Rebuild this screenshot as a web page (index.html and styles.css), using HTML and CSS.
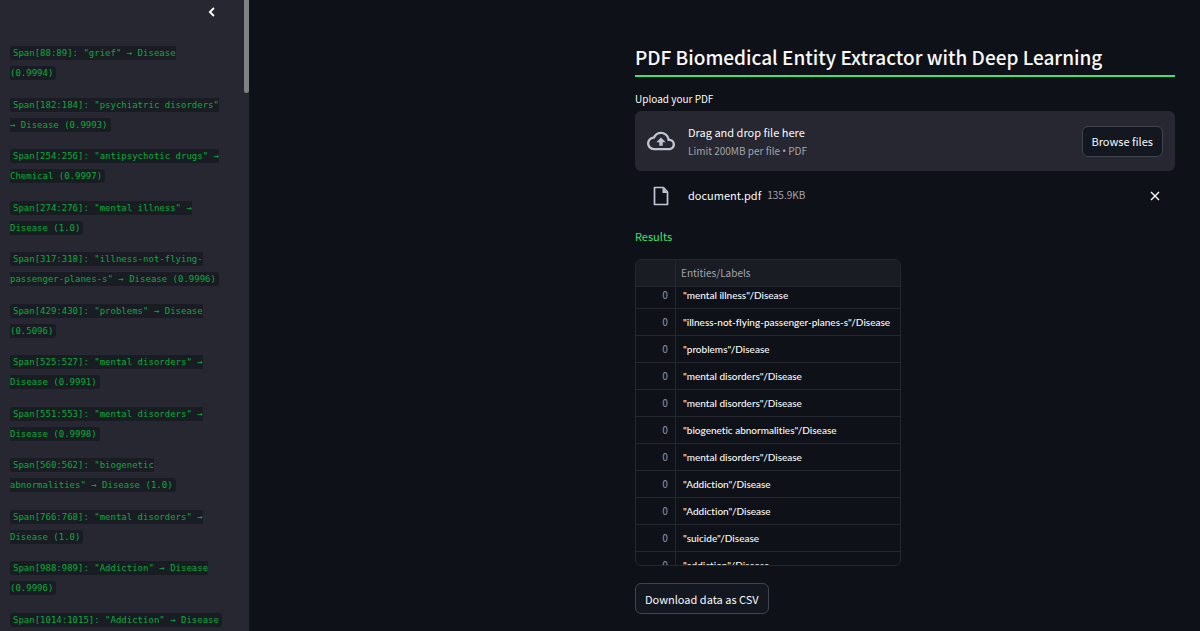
FILE: index.html
```
<!DOCTYPE html>
<html lang="en">
  <head>
    <meta charset="UTF-8" />
    <meta name="viewport" content="width=device-width, initial-scale=1.0" />
    <title>PDF Biomedical Entity Extractor</title>
    <link rel="stylesheet" href="styles.css" />
  </head>
  <body>
    <aside class="sidebar">
      <div class="sidebar-content">
        <button class="collapse" type="button" aria-label="Close sidebar">
          <svg width="14" height="14" viewBox="0 0 8 8">
            <path d="M5.1 1.7L2.800 4l2.300 2.300" fill="none" stroke="currentColor" stroke-width="1.100" />
          </svg>
        </button>
        <div class="spans">
          <p><code>Span[88:89]: "grief" → Disease (0.9994)</code></p>
          <p><code>Span[182:184]: "psychiatric disorders" → Disease (0.9993)</code></p>
          <p><code>Span[254:256]: "antipsychotic drugs" → Chemical (0.9997)</code></p>
          <p><code>Span[274:276]: "mental illness" → Disease (1.0)</code></p>
          <p><code>Span[317:318]: "illness-not-flying-passenger-planes-s" → Disease (0.9996)</code></p>
          <p><code>Span[429:430]: "problems" → Disease (0.5096)</code></p>
          <p><code>Span[525:527]: "mental disorders" → Disease (0.9991)</code></p>
          <p><code>Span[551:553]: "mental disorders" → Disease (0.9998)</code></p>
          <p><code>Span[560:562]: "biogenetic abnormalities" → Disease (1.0)</code></p>
          <p><code>Span[766:768]: "mental disorders" → Disease (1.0)</code></p>
          <p><code>Span[988:989]: "Addiction" → Disease (0.9996)</code></p>
          <p><code>Span[1014:1015]: "Addiction" → Disease</code></p>
        </div>
      </div>
      <div class="scrollbar"><div class="thumb"></div></div>
    </aside>

    <main class="main">
      <div class="block">
        <h1>PDF Biomedical Entity Extractor with Deep Learning</h1>

        <label class="upload-label" for="browse">Upload your PDF</label>
        <section class="dropzone">
          <svg class="cloud" width="28" height="28" viewBox="0 0 24 24" fill="currentColor">
            <path d="M19.35 10.04A7.49 7.49 0 0012 4C9.11 4 6.6 5.64 5.35 8.04A5.994 5.994 0 000 14c0 3.31 2.69 6 6 6h13c2.76 0 5-2.24 5-5 0-2.64-2.05-4.78-4.65-4.96zM19 18H6c-2.21 0-4-1.79-4-4 0-2.05 1.53-3.76 3.56-3.97l1.07-.11.5-.95A5.469 5.469 0 0112 6c2.62 0 4.88 1.86 5.39 4.43l.3 1.5 1.53.11A2.98 2.98 0 0122 15c0 1.65-1.35 3-3 3zM8 13h2.55v3h2.9v-3H16l-4-4z" />
          </svg>
          <div class="instructions">
            <span class="drag">Drag and drop file here</span>
            <small>Limit 200MB per file <span class="dot">•</span> PDF</small>
          </div>
          <button id="browse" class="btn" type="button">Browse files</button>
        </section>

        <div class="file">
          <svg class="file-icon" width="20" height="20" viewBox="0 0 20 20">
            <path d="M3.500 1.500h9l4 4.500v12.500h-13z" fill="none" stroke="currentColor" stroke-width="1.700" stroke-linejoin="round" />
            <path d="M11.500 1.500v5.500h5z" fill="currentColor" />
          </svg>
          <div class="file-data">
            <span class="file-name">document.pdf</span>
            <small>135.9KB</small>
          </div>
          <button class="remove" type="button" aria-label="Remove file">
            <svg width="10" height="10" viewBox="0 0 10 10">
              <path d="M1 1l8 8M9 1L1 9" fill="none" stroke="currentColor" stroke-width="1.400" />
            </svg>
          </button>
        </div>

        <p class="results">Results</p>

        <div class="frame">
          <table>
            <thead>
              <tr><th class="index"></th><th>Entities/Labels</th></tr>
            </thead>
            <tbody>
              <tr><td class="index">0</td><td>"mental illness"/Disease</td></tr>
              <tr><td class="index">0</td><td>"illness-not-flying-passenger-planes-s"/Disease</td></tr>
              <tr><td class="index">0</td><td>"problems"/Disease</td></tr>
              <tr><td class="index">0</td><td>"mental disorders"/Disease</td></tr>
              <tr><td class="index">0</td><td>"mental disorders"/Disease</td></tr>
              <tr><td class="index">0</td><td>"biogenetic abnormalities"/Disease</td></tr>
              <tr><td class="index">0</td><td>"mental disorders"/Disease</td></tr>
              <tr><td class="index">0</td><td>"Addiction"/Disease</td></tr>
              <tr><td class="index">0</td><td>"Addiction"/Disease</td></tr>
              <tr><td class="index">0</td><td>"suicide"/Disease</td></tr>
              <tr><td class="index">0</td><td>"addiction"/Disease</td></tr>
            </tbody>
          </table>
        </div>

        <button class="btn" type="button">Download data as CSV</button>
      </div>
    </main>
  </body>
</html>
```

FILE: styles.css
```
* {
  box-sizing: border-box;
}
body {
  margin: 0;
  display: flex;
  height: 100vh;
  overflow: hidden;
  background-color: #0e1117;
  color: #fafafa;
  font-family: "Noto Sans CJK SC", "Noto Sans", sans-serif;
  font-size: 11px;
  line-height: 16px;
}
button {
  font: inherit;
  color: inherit;
  cursor: pointer;
}
svg {
  display: block;
}

/* sidebar */
.sidebar {
  flex: 0 0 249px;
  display: flex;
  overflow: hidden;
  background-color: #262730;
}
.sidebar-content {
  flex: 1;
  padding: 5px 18px 0 10px;
}
.collapse {
  display: block;
  margin: 0 7px 0 auto;
  padding: 0;
  border: none;
  background: none;
}
.spans {
  margin-top: 24px;
  font-family: "DejaVu Sans Mono", monospace;
  font-size: 9px;
}
.spans p {
  margin: 0 0 12px;
  line-height: 20px;
}
.spans p:nth-child(even) {
  margin-bottom: 11px;
}
code {
  padding: 2px 3px;
  border-radius: 3px;
  background-color: #1a1c24;
  color: #09ab3b;
  font: inherit;
}
.scrollbar {
  width: 5px;
}
.thumb {
  height: 93px;
  border-radius: 0 0 3px 3px;
  background-color: #808187;
}

/* main */
.main {
  flex: 1;
  display: flex;
  justify-content: flex-end;
  padding: 44px 25px 0 25px;
}
.block {
  width: 100%;
  max-width: 540px;
}
h1 {
  margin: 0 0 14px;
  padding-bottom: 5px;
  border-bottom: 2px solid #3de273;
  font-size: 19px;
  font-weight: 500;
  line-height: 26px;
}
.upload-label {
  display: block;
  margin-bottom: 4px;
  font-size: 10px;
}
.dropzone {
  display: flex;
  align-items: center;
  height: 60px;
  padding: 0 12px;
  border-radius: 6px;
  background-color: #262730;
}
.cloud,
.file-icon {
  color: #bfc5d3;
}
.instructions {
  flex: 1;
  margin-left: 13px;
}
.drag {
  display: block;
  margin-bottom: 3px;
}
small {
  display: block;
  color: #a3a4ab;
  font-size: 10px;
}
.dot {
  font-family: "Noto Sans", sans-serif;
}
.btn {
  height: 31px;
  padding: 0 9px;
  border: 1px solid #41444c;
  border-radius: 6px;
  background-color: #131720;
}
.file {
  display: flex;
  align-items: center;
  margin-top: 15px;
  padding: 0 15px 0 16px;
}
.file-data {
  display: flex;
  flex: 1;
  padding-bottom: 3px;
  margin-left: 17px;
}
.file-name {
  margin-right: 6px;
}
.remove {
  padding: 0;
  border: none;
  background: none;
}
.results {
  margin: 22px 0 15px;
  color: #3de273;
}

/* results table */
.frame {
  width: 266px;
  height: 307px;
  margin-bottom: 17px;
  overflow: hidden;
  border: 1px solid #25272e;
  border-radius: 6px;
}
table {
  width: 100%;
  table-layout: fixed;
  border-collapse: separate;
  border-spacing: 0;
  font-size: 10px;
  white-space: nowrap;
}
th,
td {
  padding: 5px 7px;
  border-bottom: 1px solid #25272e;
  text-align: left;
  font-weight: 400;
}
th {
  padding: 5px;
  background-color: #1a1c24;
  color: #a3a4ab;
}
td {
  font-family: Lato, sans-serif;
  font-weight: 500;
  font-variant-ligatures: none;
}
.index {
  width: 40px;
  border-right: 1px solid #25272e;
  text-align: right;
  color: #80828a;
  font-family: inherit;
}
/* first row is half scrolled under the header */
tbody tr:first-child td {
  padding-top: 0;
}
```
